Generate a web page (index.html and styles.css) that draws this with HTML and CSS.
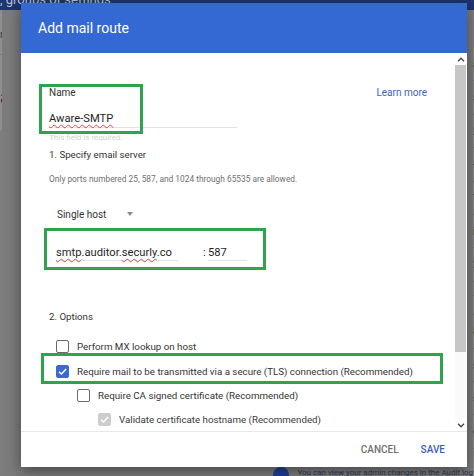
FILE: index.html
```html
<!DOCTYPE html>
<html>
<head>
<meta charset="utf-8">
<title>Add mail route</title>
<link rel="stylesheet" href="styles.css">
</head>
<body>
<div class="page">
  <div class="topbar"><span class="topbar-text">, groups of settings</span></div>
  <div class="page-body">
    <div class="left-col">
      <div class="left-row1">rkspa</div>
      <div class="left-row2">ail</div>
      <div class="left-rest"></div>
    </div>
    <div class="center-col">
      <div class="center-fill"></div>
      <div class="note"><span class="note-dot"></span><span class="note-text">You can view your admin changes in the Audit log</span></div>
    </div>
    <div class="right-col">
      <div class="rtop"></div>
      <div class="rrow">ar</div>
      <div class="rrow">s</div>
      <div class="rrow">2E</div>
      <div class="rrow">-s</div>
      <div class="rrow">Te</div>
      <div class="rrow">it-</div>
      <div class="rrow">2.</div>
      <div class="rrow">1.</div>
      <div class="rrow">82</div>
      <div class="rrow">s</div>
      <div class="rrow">s</div>
      <div class="rrow">es</div>
    </div>
  </div>
</div>

<div class="dialog">
  <div class="dialog-header">Add mail route</div>
  <div class="dialog-body">
    <div class="dialog-content">
      <div class="name-row">
        <div class="name-field">
          <div class="field-label">Name</div>
          <div class="field-input"><span class="spell">Aware-SMTP</span></div>
          <div class="field-help">This field is required.</div>
        </div>
        <span class="learn-more">Learn more</span>
      </div>
      <div class="section-title">1. Specify email server</div>
      <div class="hint">Only ports numbered 25, 587, and 1024 through 65535 are allowed.</div>
      <div class="select"><span>Single host</span><span class="select-arrow"></span></div>
      <div class="host-row">
        <div class="host-input"><span class="spell">smtp</span>.auditor.<span class="spell">securly</span>.co</div>
        <span class="colon">:</span>
        <div class="port-input">587</div>
      </div>
      <div class="section-title options-title">2. Options</div>
      <div class="check-row lvl1 r1"><span class="cb"></span><span>Perform MX lookup on host</span></div>
      <div class="check-row lvl1"><span class="cb checked"><svg viewBox="0 0 12 12" width="11" height="11"><path d="M2.2 6.2 L4.9 8.8 L9.9 3.4" fill="none" stroke="#fff" stroke-width="1.6"/></svg></span><span>Require mail to be transmitted via a secure (TLS) connection (Recommended)</span></div>
      <div class="check-row lvl2"><span class="cb"></span><span>Require CA signed certificate (Recommended)</span></div>
      <div class="check-row lvl3"><span class="cb disabled"><svg viewBox="0 0 12 12" width="11" height="11"><path d="M2.2 6.2 L4.9 8.8 L9.9 3.4" fill="none" stroke="#fff" stroke-width="1.6"/></svg></span><span class="muted">Validate certificate hostname (Recommended)</span></div>
    </div>
    <div class="scrollbar">
      <div class="sb-arrow"><svg viewBox="0 0 8 5" width="8" height="5"><path d="M1 4.2 L4 1.2 L7 4.2" fill="none" stroke="#444" stroke-width="1.3"/></svg></div>
      <div class="sb-thumb"></div>
      <div class="sb-track"></div>
      <div class="sb-arrow"><svg viewBox="0 0 8 5" width="8" height="5"><path d="M1 0.8 L4 3.8 L7 0.8" fill="none" stroke="#444" stroke-width="1.3"/></svg></div>
    </div>
  </div>
  <div class="dialog-footer">
    <span class="btn cancel">CANCEL</span>
    <span class="btn save">SAVE</span>
  </div>
  <div class="annot annot-name"></div>
  <div class="annot annot-host"></div>
  <div class="annot annot-tls"></div>
</div>
</body>
</html>
```

FILE: styles.css
```css
* { box-sizing: border-box; }
html, body { margin: 0; padding: 0; }
body {
  width: 474px;
  height: 476px;
  overflow: hidden;
  position: relative;
  font-family: Roboto, "Liberation Sans", Arial, sans-serif;
  background: #7b7b7b;
}

/* background page (dimmed) */
.page {
  display: flex;
  flex-direction: column;
  height: 476px;
}
.topbar {
  height: 10px;
  background: #1d3570;
  overflow: hidden;
  line-height: 10px;
}
.topbar-text {
  display: block;
  margin-top: -5px;
  font-size: 13px;
  color: #b9c2d8;
  white-space: nowrap;
}
.page-body {
  flex: 1;
  display: flex;
}
.left-col {
  width: 21px;
  display: flex;
  flex-direction: column;
  overflow: hidden;
}
.left-row1 {
  height: 45px;
  background: #8f8f8f;
  border-bottom: 1px solid #7e7e7e;
  font-size: 10px;
  color: #3a3a3a;
  line-height: 14px;
  padding-top: 18px;
  white-space: nowrap;
}
.left-row2 {
  height: 76px;
  background: #8d8d8d;
  border-bottom: 1px solid #7e7e7e;
  font-size: 21px;
  color: #1e1e1e;
  line-height: 24px;
  padding-top: 30px;
  white-space: nowrap;
}
.left-rest {
  flex: 1;
  background: #7d7d7d;
}
.center-col {
  flex: 1;
  display: flex;
  flex-direction: column;
  background: #7c7c7c;
}
.center-fill { flex: 1; }
.note {
  height: 12px;
  display: flex;
  align-items: flex-start;
  padding-left: 271px;
  overflow: hidden;
}
.note-dot {
  width: 16px;
  height: 16px;
  border-radius: 50%;
  background: #1f3e96;
  margin-top: 3px;
  flex: none;
}
.note-text {
  margin-left: 8px;
  margin-top: 4px;
  font-size: 8px;
  line-height: 10px;
  color: #2a3550;
  white-space: nowrap;
}
.right-col {
  width: 8px;
  overflow: hidden;
  background: #8a8a8a;
}
.rtop { height: 38px; background: #7d8597; }
.rrow {
  height: 33.4px;
  line-height: 33px;
  font-size: 10px;
  color: #2c2c2c;
  border-bottom: 1px solid #7d7d7d;
  white-space: nowrap;
}

/* dialog */
.dialog {
  position: absolute;
  left: 21px;
  top: 3px;
  width: 446px;
  height: 464px;
  background: #fff;
  box-shadow: 0 4px 14px rgba(0, 0, 0, 0.45);
  display: flex;
  flex-direction: column;
}
.dialog-header {
  height: 50px;
  flex: none;
  background: #3468d3;
  color: #fff;
  font-size: 14px;
  line-height: 50px;
  padding-left: 17px;
}
.dialog-body {
  height: 378px;
  flex: none;
  display: flex;
  overflow: hidden;
}
.dialog-content {
  flex: 1;
  padding: 0 28px;
  color: #333;
  overflow: hidden;
}
.name-row {
  margin-top: 33px;
  display: flex;
  justify-content: space-between;
  align-items: flex-start;
}
.name-field { width: 188px; }
.field-label {
  font-size: 10px;
  line-height: 14px;
  color: #333;
}
.field-input {
  margin-top: 7px;
  padding-top: 4px;
  height: 21px;
  font-size: 11.2px;
  line-height: 16px;
  color: #1f1f1f;
  border-bottom: 1px solid #e2e2e2;
}
.spell {
  text-decoration: underline wavy #e04848;
  text-decoration-thickness: 1px;
  text-underline-offset: 2px;
}
.field-help {
  margin-top: 4px;
  font-size: 8px;
  line-height: 12px;
  color: #d2d2d2;
}
.learn-more {
  font-size: 10px;
  line-height: 14px;
  color: #3d63b3;
}
.section-title {
  margin-top: 4px;
  font-size: 9.7px;
  line-height: 14px;
  color: #333;
}
.hint {
  margin-top: 11px;
  font-size: 8.35px;
  line-height: 12px;
  color: #6f6f6f;
}
.select {
  margin-top: 23px;
  padding-left: 8px;
  display: flex;
  align-items: center;
  font-size: 10px;
  line-height: 14px;
  color: #333;
}
.select-arrow {
  margin-left: 21px;
  margin-top: -3px;
  width: 0;
  height: 0;
  border-left: 3.5px solid transparent;
  border-right: 3.5px solid transparent;
  border-top: 4px solid #8a8a8a;
}
.host-row {
  margin-top: 24px;
  display: flex;
  align-items: flex-end;
  font-size: 11.2px;
  line-height: 14px;
  color: #1f1f1f;
}
.host-input {
  margin-left: 7px;
  width: 122px;
  border-bottom: 1px solid #e2e2e2;
  white-space: nowrap;
}
.colon {
  margin-left: 25px;
  width: 5px;
  padding-bottom: 1px;
}
.port-input {
  width: 39px;
  border-bottom: 1px solid #e2e2e2;
}
.options-title { margin-top: 49px; }
.check-row {
  height: 24px;
  display: flex;
  align-items: center;
  font-size: 9.75px;
  color: #333;
  white-space: nowrap;
}
.check-row.r1 { margin-top: 10px; height: 25px; }
.lvl1 { padding-left: 7px; }
.lvl2 { padding-left: 28px; }
.lvl3 { padding-left: 49px; }
.cb {
  width: 13px;
  height: 13px;
  flex: none;
  margin-right: 8px;
  border: 1.6px solid #6a6a6a;
  border-radius: 2px;
  display: flex;
  align-items: center;
  justify-content: center;
}
.cb.checked {
  background: #3b69d4;
  border-color: #3b69d4;
}
.cb.disabled {
  background: #cdcdcd;
  border-color: #cdcdcd;
}
.muted { color: #3a3a3a; }

.scrollbar {
  width: 12px;
  flex: none;
  display: flex;
  flex-direction: column;
  padding-right: 1px;
}
.sb-arrow {
  height: 12px;
  display: flex;
  align-items: center;
  justify-content: center;
  background: #fff;
}
.sb-thumb {
  height: 287px;
  background: #c6c6c6;
}
.sb-track {
  flex: 1;
  background: #fafafa;
}

.dialog-footer {
  flex: 1;
  border-top: 1px solid #e8e8e8;
  display: flex;
  justify-content: flex-end;
  align-items: center;
  padding-right: 22px;
  gap: 22px;
}
.btn {
  font-size: 10px;
  font-weight: 500;
}
.cancel { color: #707070; }
.save { color: #3a62b6; }

/* annotation boxes drawn over the dialog */
.annot {
  position: absolute;
  border: 3px solid #2ea44f;
}
.annot-name { left: 18px; top: 81px; width: 104px; height: 50px; }
.annot-host { left: 23px; top: 225px; width: 222px; height: 42px; }
.annot-tls { left: 20px; top: 350px; width: 402px; height: 31px; }
```
